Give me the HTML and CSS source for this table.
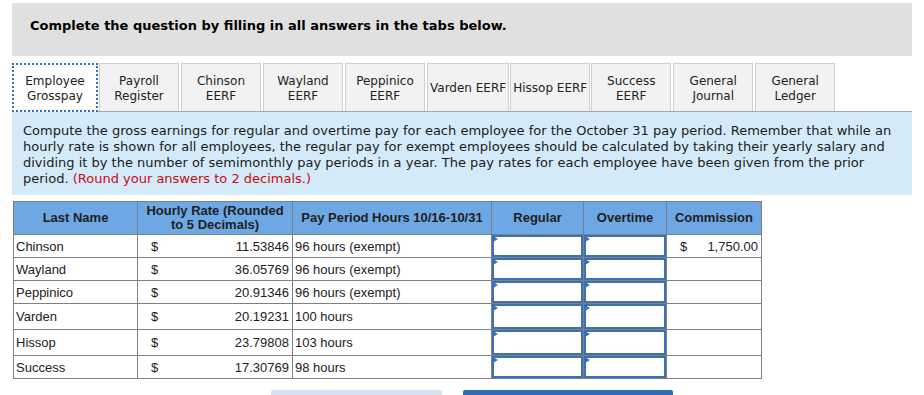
FILE: index.html
```html
<!DOCTYPE html>
<html>
<head>
<meta charset="utf-8">
<link rel="stylesheet" href="styles.css">
</head>
<body>
<div class="page">
  <div class="intro">Complete the question by filling in all answers in the tabs below.</div>
  <div class="tabs">
    <div class="tab active">Employee<br>Grosspay</div>
    <div class="tab">Payroll<br>Register</div>
    <div class="tab">Chinson<br>EERF</div>
    <div class="tab">Wayland<br>EERF</div>
    <div class="tab">Peppinico<br>EERF</div>
    <div class="tab auto">Varden EERF</div>
    <div class="tab auto">Hissop EERF</div>
    <div class="tab">Success<br>EERF</div>
    <div class="tab">General<br>Journal</div>
    <div class="tab">General<br>Ledger</div>
  </div>
  <div class="instructions">Compute the gross earnings for regular and overtime pay for each employee for the October 31 pay period. Remember that while an<br>hourly rate is shown for all employees, the regular pay for exempt employees should be calculated by taking their yearly salary and<br>dividing it by the number of semimonthly pay periods in a year. The pay rates for each employee have been given from the prior<br>period. <span class="red">(Round your answers to 2 decimals.)</span></div>
  <table class="grid">
    <colgroup>
      <col class="c1"><col class="c2"><col class="c3"><col class="c4"><col class="c5"><col class="c6">
    </colgroup>
    <thead>
      <tr>
        <th>Last Name</th>
        <th>Hourly Rate (Rounded<br>to 5 Decimals)</th>
        <th>Pay Period Hours 10/16-10/31</th>
        <th>Regular</th>
        <th>Overtime</th>
        <th>Commission</th>
      </tr>
    </thead>
    <tbody>
      <tr class="r23">
        <td>Chinson</td>
        <td><div class="money"><span>$</span><span>11.53846</span></div></td>
        <td>96 hours (exempt)</td>
        <td class="in"><div class="box"></div></td>
        <td class="in"><div class="box"></div></td>
        <td><div class="money comm"><span>$</span><span>1,750.00</span></div></td>
      </tr>
      <tr class="r23">
        <td>Wayland</td>
        <td><div class="money"><span>$</span><span>36.05769</span></div></td>
        <td>96 hours (exempt)</td>
        <td class="in"><div class="box"></div></td>
        <td class="in"><div class="box"></div></td>
        <td></td>
      </tr>
      <tr class="r23">
        <td>Peppinico</td>
        <td><div class="money"><span>$</span><span>20.91346</span></div></td>
        <td>96 hours (exempt)</td>
        <td class="in"><div class="box"></div></td>
        <td class="in"><div class="box"></div></td>
        <td></td>
      </tr>
      <tr class="r26">
        <td>Varden</td>
        <td><div class="money"><span>$</span><span>20.19231</span></div></td>
        <td>100 hours</td>
        <td class="in"><div class="box"></div></td>
        <td class="in"><div class="box"></div></td>
        <td></td>
      </tr>
      <tr class="r26">
        <td>Hissop</td>
        <td><div class="money"><span>$</span><span>23.79808</span></div></td>
        <td>103 hours</td>
        <td class="in"><div class="box"></div></td>
        <td class="in"><div class="box"></div></td>
        <td></td>
      </tr>
      <tr class="r23">
        <td>Success</td>
        <td><div class="money"><span>$</span><span>17.30769</span></div></td>
        <td>98 hours</td>
        <td class="in"><div class="box"></div></td>
        <td class="in"><div class="box"></div></td>
        <td></td>
      </tr>
    </tbody>
  </table>
  <div class="buttons">
    <div class="btn light"></div>
    <div class="btn dark"></div>
  </div>
</div>
</body>
</html>
```

FILE: styles.css
```css
html, body {
  margin: 0;
  padding: 0;
  background: #fff;
}
.page {
  padding: 3px 12px 0 12px;
  width: 900px;
  font-family: "DejaVu Sans", Verdana, sans-serif;
  color: #111;
}
.intro {
  background: #e0e0e0;
  height: 53px;
  box-sizing: border-box;
  padding: 15px 0 0 18px;
  font-size: 13px;
  font-weight: bold;
  line-height: 16px;
  color: #000;
}
.tabs {
  display: flex;
  margin-top: 7px;
  padding-left: 1px;
  border-bottom: 1px solid #a8a8a8;
  height: 48px;
}
.tab {
  box-sizing: border-box;
  width: 80px;
  height: 48px;
  margin-right: 2px;
  padding-top: 2px;
  background: #f2f2f2;
  border: 1px solid #cfcfcf;
  border-bottom: none;
  font-size: 12px;
  line-height: 15px;
  color: #222;
  text-align: center;
  display: flex;
  align-items: center;
  justify-content: center;
}
.tab.auto {
  width: auto;
  padding: 2px 2px 0 2px;
  margin-right: 1px;
}
.tab.active {
  width: 86px;
  background: #fff;
  border: 2px dotted #2f6fc4;
  height: 49px;
  margin-bottom: -1px;
  margin-left: -1px;
  margin-right: 1px;
}
.instructions {
  background: #d5eaf9;
  padding: 11px 11px 8px 11px;
  font-size: 13px;
  line-height: 16px;
  color: #1a1a1a;
  white-space: nowrap;
}
.red {
  color: #cc0a14;
}
.grid {
  margin-top: 6px;
  margin-left: 1px;
  border-collapse: collapse;
  table-layout: fixed;
  width: 748px;
  font-family: "Liberation Sans", Arial, sans-serif;
  font-size: 13px;
  color: #222;
}
.c1 { width: 124px; }
.c2 { width: 155px; }
.c3 { width: 199px; }
.c4 { width: 92px; }
.c5 { width: 83px; }
.c6 { width: 95px; }
.grid th {
  background: #6ea8e4;
  border: 1px solid #7f7f7f;
  height: 32px;
  padding: 0 3px;
  font-weight: bold;
  line-height: 14px;
  text-align: center;
  color: #1e1e1e;
}
.grid td {
  border: 1px solid #7f7f7f;
  padding: 0 2px;
  vertical-align: middle;
  white-space: nowrap;
  line-height: 15px;
}
.r23 td { height: 22px; }
.r26 td { height: 25px; }
.money {
  display: flex;
  justify-content: space-between;
  padding-left: 11px;
  padding-right: 1px;
}
.money.comm {
  padding-left: 11px;
  padding-right: 1px;
}
.grid td.in {
  padding: 0;
}
.box {
  position: relative;
  box-sizing: border-box;
  height: 22px;
  border: 2px solid #3b72b6;
  background: #fff;
}
.r26 .box { height: 25px; }
.box::before {
  content: "";
  position: absolute;
  left: -1px;
  top: -1px;
  border-left: 5px solid #2f72c8;
  border-top: 3px solid transparent;
  border-bottom: 3px solid transparent;
}
.buttons {
  display: flex;
  margin-top: 11px;
  margin-left: 259px;
  gap: 21px;
}
.btn {
  height: 30px;
  border-radius: 2px;
}
.btn.light {
  width: 171px;
  background: #d4e3f3;
}
.btn.dark {
  width: 210px;
  background: #2f6db5;
}
```
